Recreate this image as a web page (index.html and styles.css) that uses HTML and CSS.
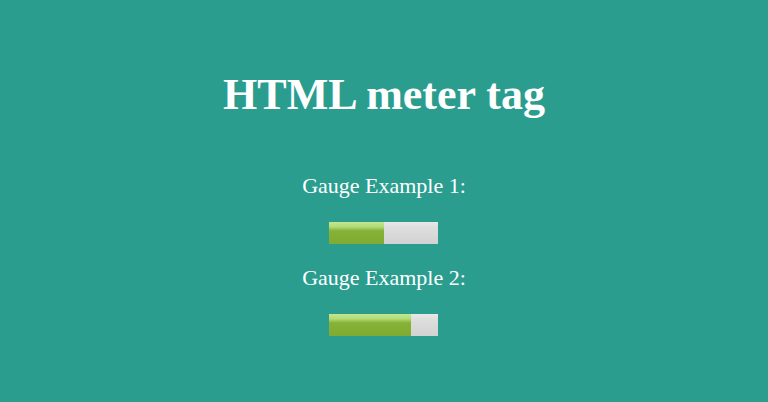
FILE: index.html
```html
<!DOCTYPE html>
<html lang="en">
<head>
    <meta charset="UTF-8">
    <meta name="viewport" content="width=device-width, initial-scale=1.0">
    <title>HTML meter tag</title>
    <link rel="stylesheet" href="styles.css">
</head>
<body>
    <div class="container">
        <h1>HTML meter tag</h1>

        <div class="gauge">
            <p class="gauge-label">Gauge Example 1:</p>
            <div class="meter" role="meter" aria-valuenow="0.5">
                <div class="meter-value" style="width: 50%"></div>
            </div>
        </div>

        <div class="gauge">
            <p class="gauge-label">Gauge Example 2:</p>
            <div class="meter" role="meter" aria-valuenow="0.75">
                <div class="meter-value" style="width: 75%"></div>
            </div>
        </div>
    </div>
</body>
</html>
```

FILE: styles.css
```css
body {
    font-family: "Liberation Serif", "Times New Roman", serif;
    background-color: #2a9d8f;
    color: #fff;
    margin: 0;
    padding: 0;
    text-align: center;
}
.container {
    display: flex;
    flex-direction: column;
    align-items: center;
    padding-top: 71px;
}
h1 {
    font-size: 44px;
    line-height: 48px;
    font-weight: bold;
    margin: 0 0 55px;
}
.gauge {
    display: flex;
    flex-direction: column;
    align-items: center;
    margin-bottom: 22px;
}
.gauge-label {
    font-size: 22px;
    line-height: 24px;
    margin: 0 0 24px;
}
.meter {
    width: 109px;
    height: 22px;
    background: linear-gradient(to bottom, #e8e8e8 0%, #dedede 25%, #d2d2d2 100%);
    display: flex;
}
.meter-value {
    height: 100%;
    background: linear-gradient(to bottom, #c4e78f 0%, #b3db78 22%, #86b236 40%, #7fab32 100%);
}
```
